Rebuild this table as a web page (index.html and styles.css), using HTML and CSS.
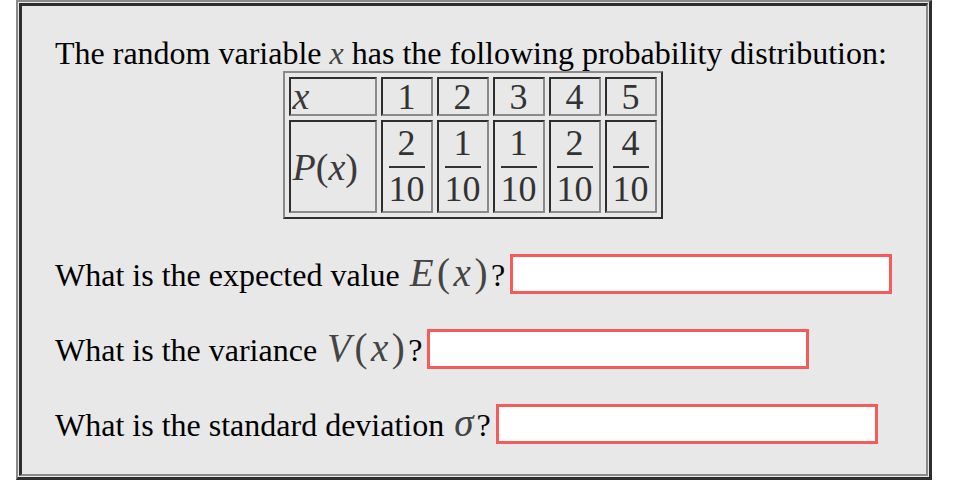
FILE: index.html
```html
<!DOCTYPE html>
<html>
<head>
<meta charset="utf-8">
<link rel="stylesheet" href="styles.css">
</head>
<body>
<div class="frame">
  <div class="inner">
    <p class="intro">The random variable <i class="m">x</i> has the following probability distribution:</p>
    <table class="dist">
      <tr class="r1">
        <td class="lab"><i class="m">x</i></td>
        <td>1</td><td>2</td><td>3</td><td>4</td><td>5</td>
      </tr>
      <tr class="r2">
        <td class="lab"><span class="m"><i>P</i>(<i>x</i>)</span></td>
        <td><span class="frac"><span class="num">2</span><span class="den">10</span></span></td>
        <td><span class="frac"><span class="num">1</span><span class="den">10</span></span></td>
        <td><span class="frac"><span class="num">1</span><span class="den">10</span></span></td>
        <td><span class="frac"><span class="num">2</span><span class="den">10</span></span></td>
        <td><span class="frac"><span class="num">4</span><span class="den">10</span></span></td>
      </tr>
    </table>
    <div class="q"><span class="qt">What is the expected value <span class="m big ex"><i>E</i>(<i>x</i>)</span>?</span><input class="ans" type="text"></div>
    <div class="q"><span class="qt">What is the variance <span class="m big vx"><i>V</i>(<i>x</i>)</span>?</span><input class="ans" type="text"></div>
    <div class="q"><span class="qt">What is the standard deviation <span class="m big"><i>σ</i></span>?</span><input class="ans" type="text"></div>
  </div>
</div>
</body>
</html>
```
FILE: styles.css
```css
html, body {
  margin: 0;
  padding: 0;
  background: #ffffff;
}
body {
  font-family: "Liberation Serif", "Times New Roman", serif;
  color: #000;
}
.frame {
  margin-left: 16px;
  width: 909px;
  height: 473px;
  border-style: solid;
  border-width: 2px 3px 3px 2px;
  border-color: #8a8a8a #2e2e2e #2e2e2e #8a8a8a;
  padding: 1px;
  background: #e8e8e8;
}
.inner {
  box-sizing: border-box;
  height: 100%;
  border-style: solid;
  border-width: 3px 2px 2px 3px;
  border-color: #2e2e2e #8a8a8a #8a8a8a #2e2e2e;
  padding: 29px 20px 0 33px;
}
.intro {
  margin: 0;
  font-size: 32px;
  line-height: 36px;
  white-space: nowrap;
}
.m {
  font-family: "Liberation Serif", serif;
  color: #3a3a3a;
  font-style: normal;
}
.m i { font-style: italic; }
i.m { font-style: italic; }
.intro i.m {
  font-size: 32px;
  color: #444;
}
.dist {
  margin: 0 auto;
  position: relative;
  left: -8px;
  border-collapse: separate;
  border-spacing: 4px;
  border-style: solid;
  border-width: 2px;
  border-color: #8a8a8a #2e2e2e #2e2e2e #8a8a8a;
  font-family: "Liberation Serif", serif;
  font-size: 36px;
  color: #333;
}
.dist td {
  border-style: solid;
  border-width: 2px;
  border-color: #2e2e2e #8a8a8a #8a8a8a #2e2e2e;
  padding: 0 6px;
  text-align: center;
  width: 36px;
}
.dist td.lab {
  width: 80px;
  padding: 0 2px;
  text-align: left;
}
.dist .lab .m, .dist .lab i.m {
  font-size: 38px;
}
.r1 td {
  height: 34px;
  line-height: 34px;
}
.r2 td {
  height: 89px;
}
.frac {
  display: flex;
  flex-direction: column;
  align-items: stretch;
}
.num {
  line-height: 40px;
  border-bottom: 2px solid #333;
  padding-bottom: 3px;
}
.den {
  line-height: 42px;
}
.q {
  display: flex;
  align-items: center;
  gap: 5px;
  height: 40px;
  margin-top: 35px;
  font-size: 32px;
  line-height: 40px;
  white-space: nowrap;
}
.qt {
  line-height: 40px;
  flex-shrink: 0;
}
.big {
  font-size: 39px;
  line-height: 1;
  color: #444;
  letter-spacing: 3px;
  margin-left: 2px;
}
.ex {
  letter-spacing: 3.5px;
}
.vx {
  letter-spacing: 3.5px;
}
.ans {
  box-sizing: border-box;
  flex-shrink: 0;
  width: 382px;
  height: 40px;
  border: 3px solid #f65a5b;
  background: #ffffff;
  margin: 0;
  padding: 0;
  outline: none;
}
```
